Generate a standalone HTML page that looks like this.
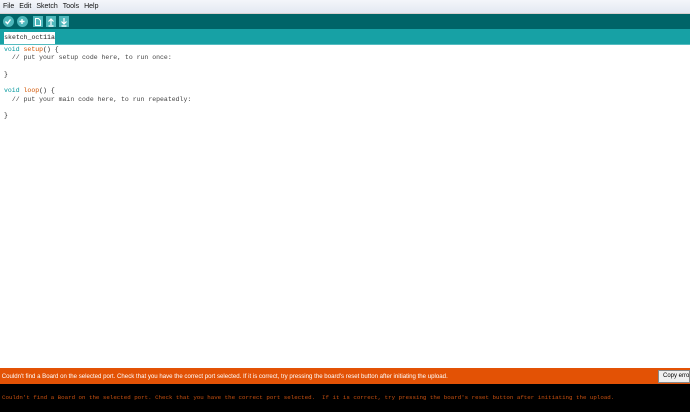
<!DOCTYPE html>
<html><head><style>
body{margin:0;width:690px;height:412px;overflow:hidden;background:#fff;font-family:"Liberation Sans",sans-serif;position:relative}
.menu{position:absolute;top:0;left:0;width:690px;height:13px;background:linear-gradient(#f4f6fa,#e3e8f2);border-bottom:1px solid #d8d0d0;font-size:7px;line-height:13px}
.menu span{margin-left:3px;margin-right:2px;color:#111}
.tool{position:absolute;top:14px;left:0;width:690px;height:15px;background:#006468}
.tabs{position:absolute;top:29px;left:0;width:690px;height:15px;background:#17a1a5;border-bottom:1px solid #55bcc0}
.tab{position:absolute;left:4px;top:3px;width:51px;height:12px;background:#fff;font-family:"Liberation Mono",monospace;font-size:6.5px;line-height:12px;text-align:center;color:#222}
.c{position:absolute;top:16px;width:11px;height:11px;border-radius:50%;background:#4db7bb}
.s{position:absolute;top:16px;width:10px;height:11px;background:#4db7bb}
.code{position:absolute;top:46px;left:4px;font-family:"Liberation Mono",monospace;font-size:6.5px;line-height:8.3px;color:#222;white-space:pre}
.k{color:#00979c}.f{color:#d35400}.cm{color:#444}
.err{position:absolute;top:368px;left:0;width:690px;height:16px;background:#e35205;color:#fff;font-size:6.1px;line-height:18px}
.btn{position:absolute;right:0;top:2px;width:26px;height:11px;background:#f0f0f0;border:1px solid #888;color:#000;font-size:6px;line-height:11px;padding-left:4px;overflow:hidden;white-space:nowrap}
.con{position:absolute;top:384px;left:0;width:690px;height:28px;background:#000;color:#c8500f;font-family:"Liberation Mono",monospace;font-size:5.8px;line-height:8px;white-space:pre;padding-top:10px;box-sizing:border-box;padding-left:2px}
</style></head><body>
<div class="menu"><span>File</span><span>Edit</span><span>Sketch</span><span>Tools</span><span>Help</span></div>
<div class="tool"></div>
<div class="c" style="left:3px"></div><div class="c" style="left:17px"></div>
<div class="s" style="left:33px"></div><div class="s" style="left:46px"></div><div class="s" style="left:59px"></div>
<svg style="position:absolute;left:0;top:14px" width="80" height="15">
<path d="M5.5 7.5l2 2 3-4" stroke="#fff" stroke-width="1.4" fill="none"/>
<path d="M19.5 7.5h5M22 5v5" stroke="#fff" stroke-width="1.4" fill="none"/>
<path d="M35.5 4.5h3l2 2v5h-5z" stroke="#fff" fill="none"/>
<path d="M51 11V5M48.5 7.5L51 5l2.5 2.5M48.5 12h5" stroke="#fff" stroke-width="1.2" fill="none"/>
<path d="M64 4v6M61.5 7.5L64 10l2.5-2.5M61.5 12h5" stroke="#fff" stroke-width="1.2" fill="none"/>
</svg>
<div class="tabs"><div class="tab">sketch_oct11a</div></div>
<div class="code"><span class="k">void</span> <span class="f">setup</span>() {
  <span class="cm">// put your setup code here, to run once:</span>

}

<span class="k">void</span> <span class="f">loop</span>() {
  <span class="cm">// put your main code here, to run repeatedly:</span>

}</div>
<div class="err">&nbsp;Couldn't find a Board on the selected port. Check that you have the correct port selected.  If it is correct, try pressing the board's reset button after initiating the upload.<div class="btn">Copy error</div></div>
<div class="con">Couldn't find a Board on the selected port. Check that you have the correct port selected.  If it is correct, try pressing the board's reset button after initiating the upload.</div>
</body></html>
